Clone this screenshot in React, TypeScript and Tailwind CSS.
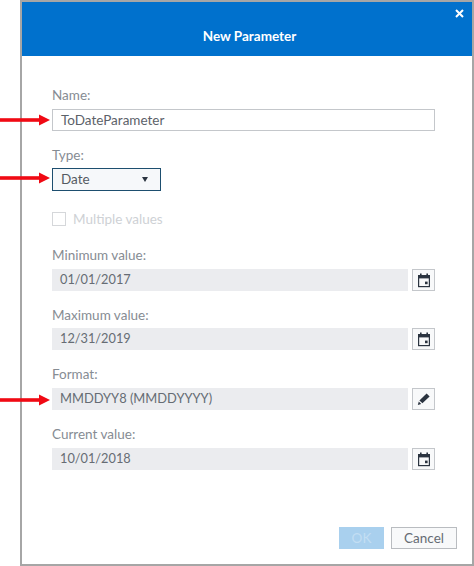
import React from "react";

const font = { fontFamily: '"Lato", "Open Sans", sans-serif' };

function Arrow({ className }: { className: string }) {
  return (
    <svg className={`absolute left-0 ${className}`} width="52" height="14" viewBox="0 0 52 14">
      <rect x="0" y="5.2" width="41" height="3.6" fill="#f00a14" />
      <path d="M39 1.5 L50 7 L39 12.5 Z" fill="#f00a14" />
    </svg>
  );
}

function CalendarIcon() {
  return (
    <svg width="14" height="15" viewBox="0 0 14 15">
      <rect x="3" y="0.5" width="1.6" height="3" fill="#2b3440" />
      <rect x="9.4" y="0.5" width="1.6" height="3" fill="#2b3440" />
      <rect x="1" y="2" width="12" height="3.4" fill="#2b3440" />
      <rect x="1.6" y="2.6" width="10.8" height="11" fill="none" stroke="#2b3440" strokeWidth="1.2" />
      <rect x="8" y="8.6" width="2.6" height="2.6" fill="#2b3440" />
    </svg>
  );
}

function PencilIcon() {
  return (
    <svg width="14" height="14" viewBox="0 0 14 14">
      <path d="M9.6 1.4 L12.6 4.4 L5.4 11.2 L2.4 8.4 Z" fill="#2b3440" />
      <path d="M1.8 9.6 L4.2 12 L0.8 13 Z" fill="#2b3440" />
    </svg>
  );
}

function ReadOnlyField({
  label,
  value,
  icon,
  outer,
  inner,
  valueSize,
}: {
  label: string;
  value: string;
  icon: React.ReactNode;
  outer: string;
  inner: string;
  valueSize: string;
}) {
  return (
    <div className={outer}>
      <div className="h-[18px] text-[13.5px] leading-[18px] text-[#868c93]">{label}</div>
      <div className={`flex h-[22px] w-[383px] items-stretch justify-between ${inner}`}>
        <div className={`flex w-[356px] items-center bg-[#ebecef] pl-2 text-[#666c74] ${valueSize}`}>{value}</div>
        <div className="flex w-[23px] items-center justify-center border border-[#c4c7cb] bg-[#f8f9fa]">{icon}</div>
      </div>
    </div>
  );
}

export default function App() {
  return (
    <div className="relative h-[566px] w-[474px] overflow-hidden bg-white" style={font}>
      <div className="ml-5 flex h-[566px] w-[454px] flex-col border-2 border-[#a6a6a6] bg-white">
        <div className="relative flex h-[54px] shrink-0 items-end justify-center bg-[#0071cd] pb-[11px] pl-[5px]">
          <span className="text-[13.5px] font-bold leading-[18px] text-white">New Parameter</span>
          <svg className="absolute right-[8px] top-[7px]" width="9" height="9" viewBox="0 0 9 9">
            <path d="M1 1 L8 8 M8 1 L1 8" stroke="#ffffff" strokeWidth="2" />
          </svg>
        </div>
        <div className="flex flex-1 flex-col pl-[30px]">
          <div className="h-[30px] shrink-0" />
          <div className="h-[18px] text-[13.5px] leading-[18px] text-[#868c93]">Name:</div>
          <div className="mt-[5px] flex h-[22px] w-[383px] items-center border border-[#c4c7cb] bg-white pl-2 text-[13.5px] text-[#5c6269]">
            ToDateParameter
          </div>
          <div className="mt-[15px] h-[18px] text-[13.5px] leading-[18px] text-[#868c93]">Type:</div>
          <div className="mt-[4px] flex h-[23px] w-[109px] items-center justify-between border border-[#1d4e6f] bg-[#f6f8fa] pl-2 pr-[12px] text-[13.5px] text-[#555b62]">
            <span>Date</span>
            <svg width="6" height="5" viewBox="0 0 6 5">
              <path d="M0 0 H6 L3 5 Z" fill="#2b3440" />
            </svg>
          </div>
          <div className="mt-[21px] flex h-[14px] items-center gap-[7px]">
            <div className="h-[14px] w-[14px] border border-[#d5d7da] bg-white" />
            <span className="text-[13.5px] text-[#ced1d5]">Multiple values</span>
          </div>
          <ReadOnlyField label="Minimum value:" value="01/01/2017" icon={<CalendarIcon />} outer="mt-[20px]" inner="mt-[5px]" valueSize="text-[12.75px]" />
          <ReadOnlyField label="Maximum value:" value="12/31/2019" icon={<CalendarIcon />} outer="mt-[15px]" inner="mt-[4px]" valueSize="text-[12.75px]" />
          <ReadOnlyField label="Format:" value="MMDDYY8 (MMDDYYYY)" icon={<PencilIcon />} outer="mt-[15px]" inner="mt-[5px]" valueSize="text-[12.9px]" />
          <ReadOnlyField label="Current value:" value="10/01/2018" icon={<CalendarIcon />} outer="mt-[15px]" inner="mt-[5px]" valueSize="text-[12.75px]" />
          <div className="mt-[57px] flex w-[405px] justify-end gap-[7px]">
            <div className="flex h-[22px] w-[45px] items-center justify-center bg-[#a9d0ee] text-[13.5px] text-[#c3def3]">OK</div>
            <div className="flex h-[22px] w-[66px] items-center justify-center border border-[#b9bcc0] bg-[#f8f9fa] text-[13.5px] text-[#666c74]">
              Cancel
            </div>
          </div>
        </div>
      </div>
      <Arrow className="top-[113px]" />
      <Arrow className="top-[171px]" />
      <Arrow className="top-[393px]" />
    </div>
  );
}
